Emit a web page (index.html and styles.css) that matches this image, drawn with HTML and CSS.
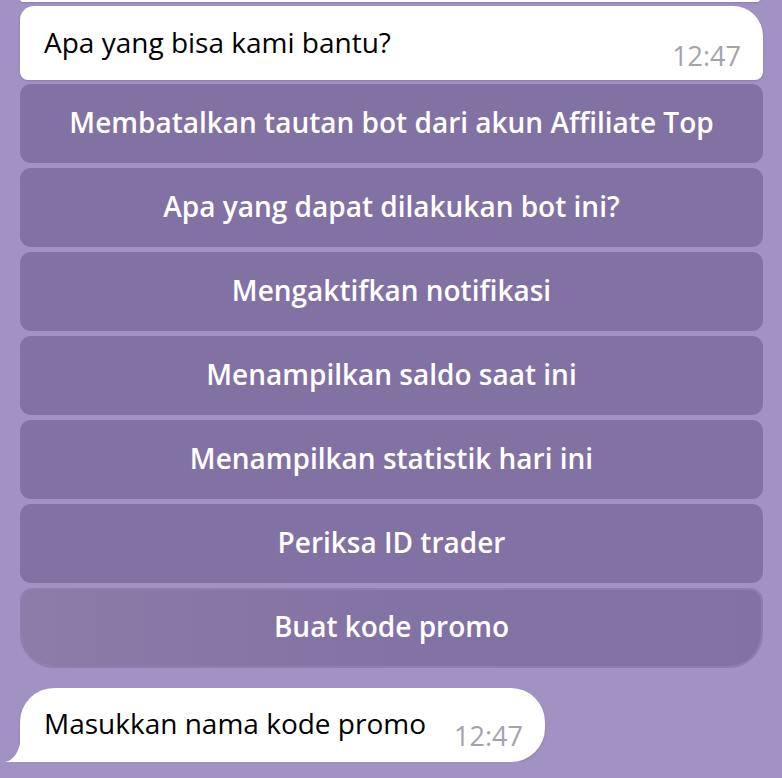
FILE: index.html
```html
<!DOCTYPE html>
<html lang="id">
<head>
  <meta charset="UTF-8">
  <meta name="viewport" content="width=device-width, initial-scale=1.0">
  <title>Chat</title>
  <link rel="stylesheet" href="styles.css">
</head>
<body>
  <div class="chat">
    <div class="bubble bubble-prev"></div>

    <div class="bubble bubble-bot">
      <span class="text">Apa yang bisa kami bantu?</span>
      <span class="time">12:47</span>
    </div>

    <div class="keyboard">
      <button class="key">Membatalkan tautan bot dari akun Affiliate Top</button>
      <button class="key">Apa yang dapat dilakukan bot ini?</button>
      <button class="key">Mengaktifkan notifikasi</button>
      <button class="key">Menampilkan saldo saat ini</button>
      <button class="key">Menampilkan statistik hari ini</button>
      <button class="key">Periksa ID trader</button>
      <button class="key key-last">Buat kode promo</button>
    </div>

    <div class="bubble bubble-tail">
      <span class="text">Masukkan nama kode promo</span>
      <span class="time">12:47</span>
    </div>
  </div>
</body>
</html>
```

FILE: styles.css
```css
body {
  margin: 0;
  background: #a291c3;
  font-family: "Open Sans", "Noto Sans", sans-serif;
}

.chat {
  display: flex;
  flex-direction: column;
  padding: 0 19px 0 20px;
}

.bubble {
  background: #fff;
  box-shadow: 0 1px 2px rgba(80, 60, 120, 0.25);
}

.bubble-prev {
  height: 3px;
  margin-top: -1px;
  border-radius: 0 0 8px 8px;
  margin-right: 3px;
}

.bubble-bot {
  margin-top: 4px;
  height: 74px;
  border-radius: 14px 30px 8px 8px;
  display: flex;
  align-items: flex-start;
  justify-content: space-between;
  padding: 0 22px 0 24px;
}

.bubble .text {
  font-size: 28px;
  color: #000;
  line-height: 36px;
  margin-top: 18px;
}

.bubble .time {
  font-size: 27px;
  color: #a3a3ab;
  line-height: 30px;
  margin-top: 35px;
}

.keyboard {
  display: flex;
  flex-direction: column;
  gap: 5px;
  margin-top: 4px;
}

.key {
  height: 79px;
  border: none;
  border-radius: 11px;
  background: #8271a3;
  color: #fff;
  font-family: inherit;
  font-size: 28px;
  font-weight: 600;
  padding: 0 0 4px;
}

.key-last {
  margin: 2px 2px 0;
  height: 76px;
  border-radius: 11px 11px 32px 32px;
  background: linear-gradient(to right, #8c7ca9, #8372a4 50%, #8271a3);
  box-shadow: 0 0 0 2px #8e7eb0;
}

.bubble-tail {
  align-self: flex-start;
  margin-top: 22px;
  height: 74px;
  border-radius: 34px 34px 34px 0;
  display: flex;
  align-items: flex-start;
  gap: 28px;
  padding: 0 22px 0 24px;
  position: relative;
}

.bubble-tail .text {
  margin-top: 17px;
}

.bubble-tail .time {
  margin-top: 33px;
}

.bubble-tail::before {
  content: "";
  position: absolute;
  left: -15px;
  bottom: 0;
  width: 16px;
  height: 26px;
  background: #fff;
  clip-path: path("M0 26 C 10 24 15 14 16 0 L 16 26 Z");
}
```
